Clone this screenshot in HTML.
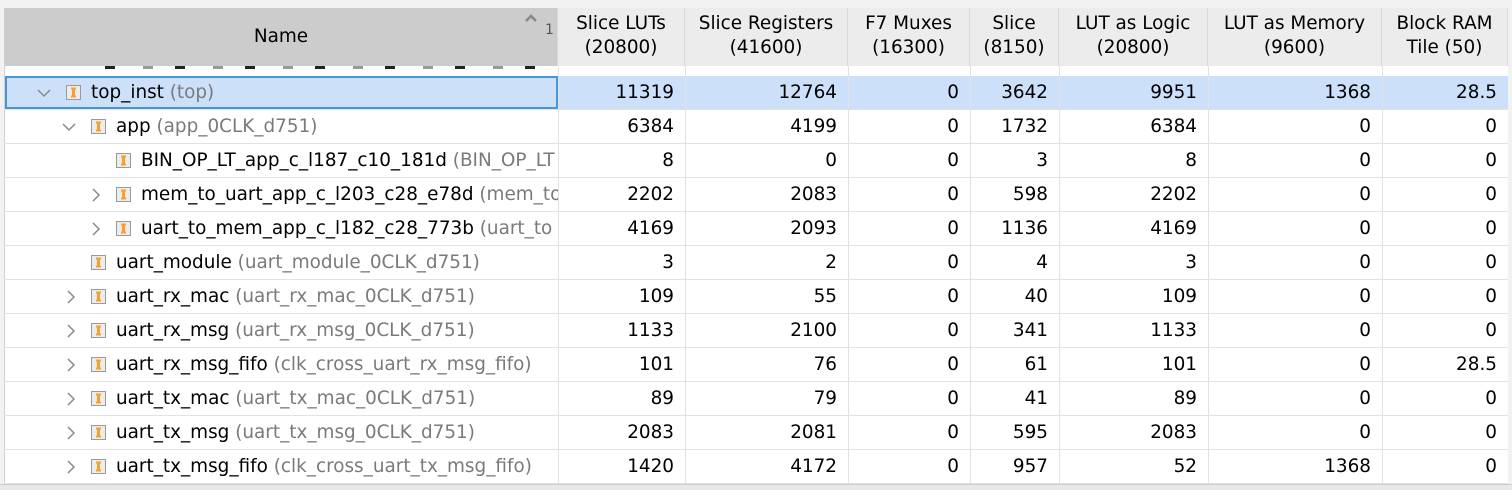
<!DOCTYPE html>
<html><head><meta charset="utf-8"><style>
*{margin:0;padding:0;box-sizing:border-box}
body{width:1512px;height:490px;background:#fff;position:relative;overflow:hidden;font-family:"DejaVu Sans","Liberation Sans",sans-serif;font-size:18.4px;color:#000}
.a{position:absolute}
.hd{position:absolute;top:8px;height:58px;background:#ececec;border-right:1px solid #d8d8d8;text-align:center;line-height:24px;padding-top:4px;font-size:18.4px;white-space:nowrap}
.vl{position:absolute;top:66px;width:1px;height:418px;background:#e2e2e2}
.hl{position:absolute;left:4px;width:1504px;height:1px;background:#e2e2e2}
.row{position:absolute;left:0;width:1512px;height:34px;line-height:33px}
.c{position:absolute;top:0;text-align:right}
.nm{position:absolute;top:0;white-space:nowrap}
.g{color:#7a7a7a}
.ic{position:absolute;top:9px;width:15px;height:15px;border:1px solid #9a9a9a;background:#ececec}
.ch{position:absolute;top:10px}
</style></head><body>
<div class="a" style="left:0;top:0;width:1512px;height:8px;background:#f2f2f2"></div>
<div class="a" style="left:0;top:0;width:4px;height:490px;background:#f2f2f2"></div>
<div class="a" style="left:4px;top:8px;width:1px;height:476px;background:#d0d0d0"></div>
<div class="hd" style="left:5px;width:553px;background:#cccccc;line-height:58px;padding-top:0">Name</div>
<svg class="a" style="left:524px;top:13px" width="14" height="10"><polyline points="2,8 7,3 12,8" fill="none" stroke="#888" stroke-width="2.5"/></svg>
<div class="a" style="left:545px;top:22px;color:#555;font-size:14px">1</div>
<div class="hd" style="left:558px;width:127px">Slice LUTs<br>(20800)</div>
<div class="hd" style="left:685px;width:163px">Slice Registers<br>(41600)</div>
<div class="hd" style="left:848px;width:122px">F7 Muxes<br>(16300)</div>
<div class="hd" style="left:970px;width:89px">Slice<br>(8150)</div>
<div class="hd" style="left:1059px;width:149px">LUT as Logic<br>(20800)</div>
<div class="hd" style="left:1208px;width:174px">LUT as Memory<br>(9600)</div>
<div class="hd" style="left:1382px;width:126px">Block RAM<br>Tile (50)</div>
<div class="a" style="left:1508px;top:8px;width:4px;height:482px;background:#f2f2f2"></div>
<div class="a" style="left:105px;top:66px;width:450px;height:3px;background:repeating-linear-gradient(90deg,#222 0 10px,transparent 10px 38px,#999 38px 48px,transparent 48px 70px)"></div>
<div class="a" style="left:5px;top:76px;width:1503px;height:33px;background:#cde0fa"></div>
<div class="a" style="left:5px;top:76px;width:553px;height:33px;border:2px solid #4a95d6"></div>
<div class="a" style="left:0;top:484px;width:1512px;height:6px;background:#e8e8e8;border-top:1px solid #ccc"></div>
<div id="rows"></div>
<script>
var D=[
[1,"v","top_inst","(top)",[11319,12764,0,3642,9951,1368,28.5]],
[2,"v","app","(app_0CLK_d751)",[6384,4199,0,1732,6384,0,0]],
[3,"","BIN_OP_LT_app_c_l187_c10_181d","(BIN_OP_LT",[8,0,0,3,8,0,0]],
[3,">","mem_to_uart_app_c_l203_c28_e78d","(mem_to",[2202,2083,0,598,2202,0,0]],
[3,">","uart_to_mem_app_c_l182_c28_773b","(uart_to",[4169,2093,0,1136,4169,0,0]],
[2,"","uart_module","(uart_module_0CLK_d751)",[3,2,0,4,3,0,0]],
[2,">","uart_rx_mac","(uart_rx_mac_0CLK_d751)",[109,55,0,40,109,0,0]],
[2,">","uart_rx_msg","(uart_rx_msg_0CLK_d751)",[1133,2100,0,341,1133,0,0]],
[2,">","uart_rx_msg_fifo","(clk_cross_uart_rx_msg_fifo)",[101,76,0,61,101,0,28.5]],
[2,">","uart_tx_mac","(uart_tx_mac_0CLK_d751)",[89,79,0,41,89,0,0]],
[2,">","uart_tx_msg","(uart_tx_msg_0CLK_d751)",[2083,2081,0,595,2083,0,0]],
[2,">","uart_tx_msg_fifo","(clk_cross_uart_tx_msg_fifo)",[1420,4172,0,957,52,1368,0]]];
var R=[685,848,970,1059,1208,1382,1508];
var h="";
[558,685,848,970,1059,1208,1382].forEach(function(x){h+='<div class="vl" style="left:'+x+'px"></div>'});
var icon='<svg width="13" height="13" style="position:absolute;left:0;top:0"><path d="M4 2.5H9M4 10.5H9" stroke="#f7a030" stroke-width="2"/><rect x="5" y="3" width="3" height="7" fill="#f7a030"/></svg>';
D.forEach(function(d,i){
 var y=76+i*34;
 h+='<div class="hl" style="top:'+(y+33)+'px"></div>';
 h+='<div class="row" style="top:'+y+'px">';
 var b=44+(d[0]-1)*25;
 if(d[1]=="v")h+='<svg class="ch" style="left:'+(b-7)+'px" width="14" height="12"><polyline points="1,4 7,10 13,4" fill="none" stroke="#8a8a8a" stroke-width="1.5"/></svg>';
 if(d[1]==">")h+='<svg class="ch" style="left:'+(b-4)+'px" width="12" height="14"><polyline points="3,1 9,7 3,13" fill="none" stroke="#8a8a8a" stroke-width="1.5"/></svg>';
 h+='<div class="ic" style="left:'+(b+22)+'px">'+icon+'</div>';
 h+='<div class="nm" style="left:'+(b+47)+'px;width:'+(558-b-47)+'px;overflow:hidden">'+d[2]+' <span class="g">'+d[3]+'</span></div>';
 d[4].forEach(function(v,j){h+='<div class="c" style="left:0;width:'+(R[j]-11)+'px">'+v+'</div>'});
 h+='</div>';
});
document.getElementById("rows").innerHTML=h;
</script>
</body></html>
